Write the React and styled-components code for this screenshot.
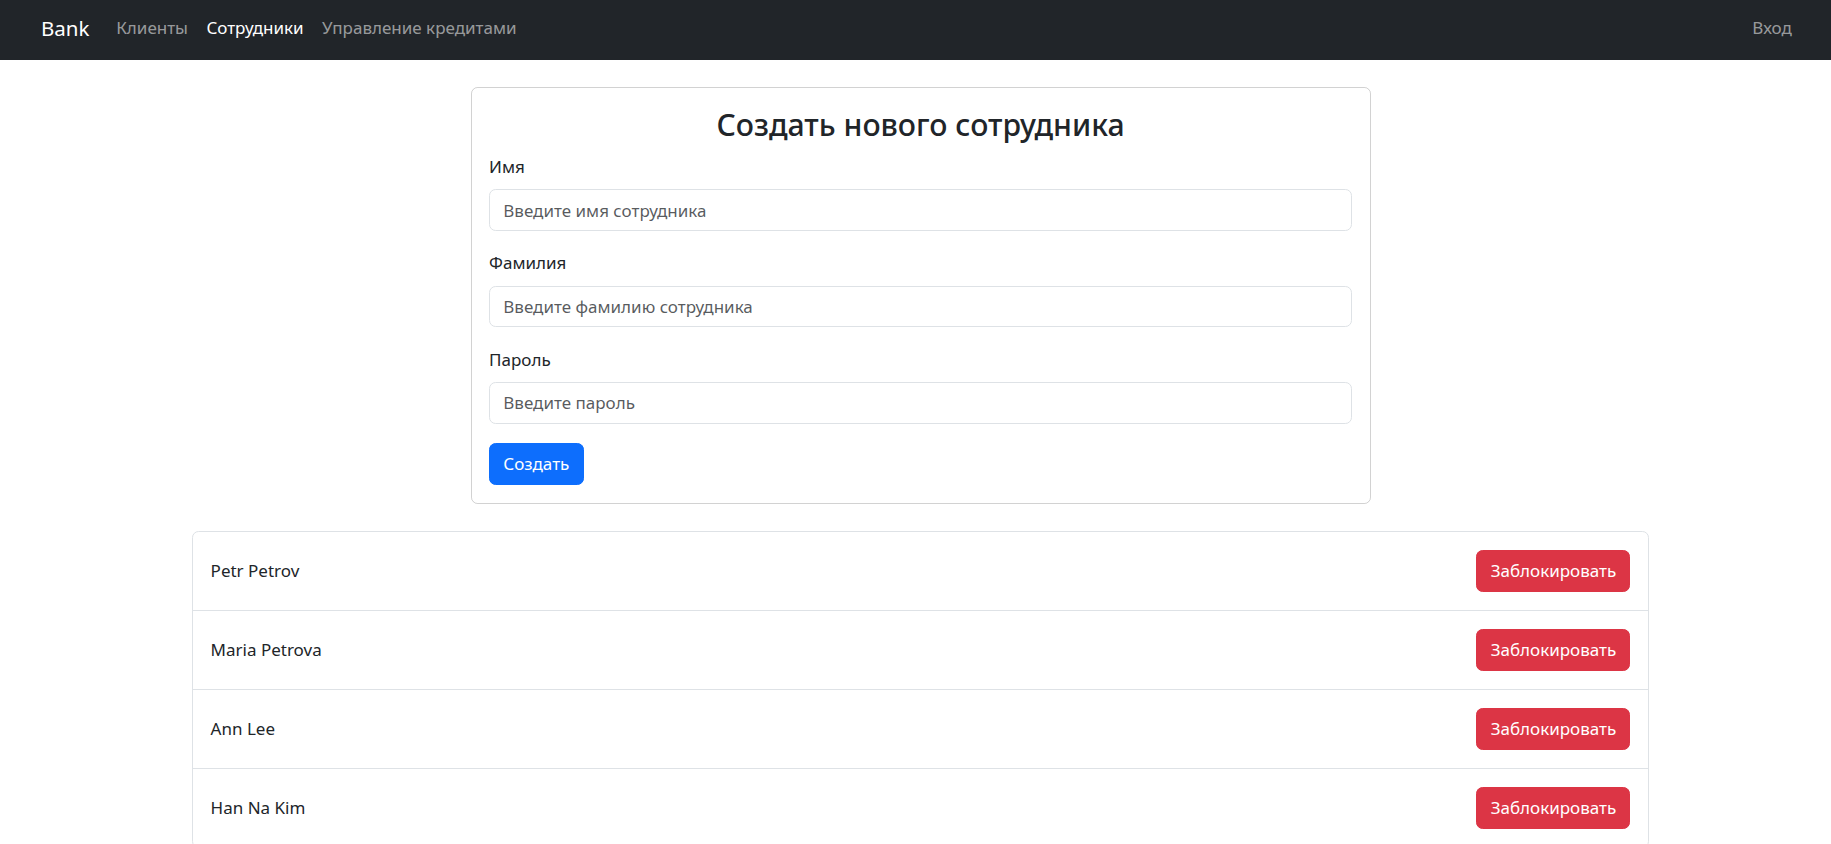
import styled, { createGlobalStyle } from 'styled-components';

const GlobalStyle = createGlobalStyle`
    * { box-sizing: border-box; }
    body {
        margin: 0;
        background: #fff;
        color: #212529;
        font-family: "Noto Sans", "Open Sans", sans-serif;
        font-size: 17px;
        line-height: 26.4px;
    }
`

const Navbar = styled.nav`
    background-color: #212529;
    height: 60px;
    display: flex;
    align-items: center;
    padding: 0 30px 4px 41px;
`

const Brand = styled.a`
    color: #fff;
    font-size: 20.5px;
    line-height: 33px;
    margin-right: 17.6px;
    text-decoration: none;
`

const NavLinks = styled.div`
    display: flex;
    flex: 1;
`

const NavLink = styled.a`
    color: ${props => props.active ? '#fff' : 'rgba(255,255,255,.55)'};
    padding: 8.8px 9.2px;
    text-decoration: none;
    cursor: pointer;
`

const Main = styled.main`
    padding: 0 0 40px 10px;
`

const FormCard = styled.form`
    width: 900px;
    margin: 27px auto 0;
    border: 1px solid rgba(0,0,0,.175);
    border-radius: 6.6px;
    padding: 17.6px;
`

const Title = styled.h3`
    margin: 0 0 10px;
    text-align: center;
    font-size: 30.2px;
    font-weight: 500;
    line-height: 38.5px;
`

const Field = styled.div`
    margin-bottom: 19.4px;
`

const Label = styled.label`
    display: block;
    margin-bottom: 8.8px;
`

const Input = styled.input`
    display: block;
    width: 100%;
    height: 41.8px;
    padding: 6.6px 13.2px;
    font: inherit;
    color: #212529;
    border: 1px solid #dee2e6;
    border-radius: 6.6px;
    outline: none;
    &::placeholder {
        color: rgba(33,37,41,.75);
    }
`

const Button = styled.button`
    font: inherit;
    color: #fff;
    background-color: ${props => props.danger ? '#dc3545' : '#0d6efd'};
    border: 1px solid ${props => props.danger ? '#dc3545' : '#0d6efd'};
    border-radius: 6.6px;
    height: 41.8px;
    padding: 0 13.2px;
    cursor: pointer;
`

const List = styled.ul`
    width: 1457px;
    margin: 27px auto 0;
    padding: 0;
    list-style: none;
    border: 1px solid #dee2e6;
    border-radius: 6.6px;
`

const Item = styled.li`
    display: flex;
    align-items: center;
    justify-content: space-between;
    padding: 18.2px 17.6px;
    & + & {
        border-top: 1px solid #dee2e6;
    }
`

const employees = ['Petr Petrov', 'Maria Petrova', 'Ann Lee', 'Han Na Kim']

const App = () => {
    return (
        <>
            <GlobalStyle />
            <Navbar>
                <Brand href="#">Bank</Brand>
                <NavLinks>
                    <NavLink>Клиенты</NavLink>
                    <NavLink active>Сотрудники</NavLink>
                    <NavLink>Управление кредитами</NavLink>
                </NavLinks>
                <NavLink>Вход</NavLink>
            </Navbar>
            <Main>
                <FormCard onSubmit={e => e.preventDefault()}>
                    <Title>Создать нового сотрудника</Title>
                    <Field>
                        <Label>Имя</Label>
                        <Input placeholder="Введите имя сотрудника" />
                    </Field>
                    <Field>
                        <Label>Фамилия</Label>
                        <Input placeholder="Введите фамилию сотрудника" />
                    </Field>
                    <Field>
                        <Label>Пароль</Label>
                        <Input type="password" placeholder="Введите пароль" />
                    </Field>
                    <Button type="submit">Создать</Button>
                </FormCard>
                <List>
                    {employees.map(name => (
                        <Item key={name}>
                            <span>{name}</span>
                            <Button danger>Заблокировать</Button>
                        </Item>
                    ))}
                </List>
            </Main>
        </>
    );
};

export default App;
